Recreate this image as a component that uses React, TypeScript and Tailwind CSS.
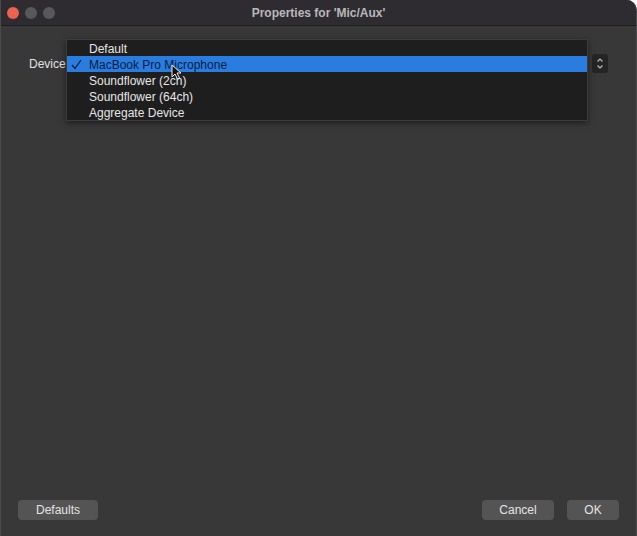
const devices = [
  "Default",
  "MacBook Pro Microphone",
  "Soundflower (2ch)",
  "Soundflower (64ch)",
  "Aggregate Device",
];

function Cursor() {
  return (
    <svg className="absolute left-[170px] top-[64px]" width="11" height="16" viewBox="0 0 11 16">
      <path d="M1 1 L1 13 L4 10 L6.5 15 L8.5 14 L6 9 L10 9 Z" fill="#111" stroke="#eee" strokeWidth="1" />
    </svg>
  );
}

export default function App() {
  return (
    <div
      className="w-[637px] h-[536px] flex flex-col bg-[#383838] border-x border-[#4a4a4a] rounded-tr-[10px] overflow-hidden relative text-[12px] text-[#e2e2e2]"
      style={{ fontFamily: '"Liberation Sans", Arial, sans-serif' }}
    >
      {/* title bar */}
      <div className="h-[26px] shrink-0 relative flex items-center justify-center bg-[#2e2c30] border-b border-[#1c1c1c]">
        <div className="absolute left-[6px] top-[7px] flex gap-[6px]">
          <span className="w-[12px] h-[12px] rounded-full bg-[#ec6250]" />
          <span className="w-[12px] h-[12px] rounded-full bg-[#58575a]" />
          <span className="w-[12px] h-[12px] rounded-full bg-[#58575a]" />
        </div>
        <span className="font-bold text-[#b9b8ba] text-[12px]">Properties for 'Mic/Aux'</span>
      </div>

      {/* content */}
      <div className="flex-1 flex flex-col justify-between px-[17px] pb-[16px]">
        <div className="flex items-center pt-[28px] pl-[11px] pr-[11px]">
          <span className="w-[37px]">Device</span>
          <div className="flex-1 flex justify-end">
            <div className="w-[16px] h-[19px] rounded-[3px] bg-[#242424] flex flex-col items-center justify-center">
              <svg width="8" height="13" viewBox="0 0 8 13" fill="none" stroke="#bdbdbd" strokeWidth="1.1">
                <path d="M1.5 4.5 L4 2 L6.5 4.5" />
                <path d="M1.5 8.5 L4 11 L6.5 8.5" />
              </svg>
            </div>
          </div>
        </div>

        <div className="flex items-center justify-between">
          <button className="w-[80px] h-[20px] rounded-[4px] bg-[#545454] text-[#e4e4e4]">Defaults</button>
          <div className="flex gap-[13px]">
            <button className="w-[72px] h-[20px] rounded-[4px] bg-[#545454] text-[#e4e4e4]">Cancel</button>
            <button className="w-[52px] h-[20px] rounded-[4px] bg-[#545454] text-[#e4e4e4]">OK</button>
          </div>
        </div>
      </div>

      {/* popup menu */}
      <div className="absolute left-[65px] top-[39px] w-[522px] bg-[#1e1e1e] border border-[#3c3c3c] shadow-[0_2px_6px_rgba(0,0,0,0.5)]">
        {devices.map((d, i) => (
          <div
            key={d}
            className={
              i === 1
                ? "h-[16px] flex items-center bg-[#2a7ddf] text-[#0b1c45]"
                : "h-[16px] flex items-center text-[#e6e6e6]"
            }
          >
            <span className="w-[22px] pl-[4px] flex items-center">
              {i === 1 && (
                <svg width="11" height="11" viewBox="0 0 11 11" fill="none" stroke="#0b1c45" strokeWidth="1.3">
                  <path d="M1 6 L4 9.5 L10 1" />
                </svg>
              )}
            </span>
            <span className="pt-[1px]">{d}</span>
          </div>
        ))}
      </div>
      <Cursor />
    </div>
  );
}
